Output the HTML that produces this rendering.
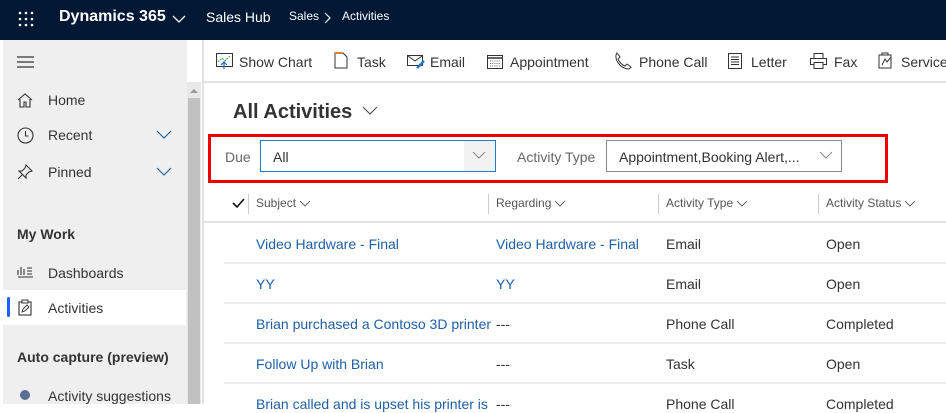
<!DOCTYPE html>
<html><head><meta charset="utf-8"><style>
*{box-sizing:border-box;margin:0;padding:0}
body{width:946px;height:404px;overflow:hidden;background:#fff;font-family:"Segoe UI","Liberation Sans",sans-serif;font-size:14px;color:#333;position:relative;line-height:1.3}
.a{position:absolute;white-space:nowrap}
.top{left:0;top:0;width:946px;height:40px;background:#001834;color:#fff}
.side{left:3px;top:40px;width:184px;height:364px;background:#efefef}
.lnk{color:#1e5fa5}
.hd{color:#555;font-size:12px}
.sep{width:1px;height:20px;background:#ccc;top:194px}
.rb{left:224px;width:722px;height:2px;background:#eeeeee}
svg{position:absolute}
.hd svg{position:static;vertical-align:middle;margin-left:3px}
</style></head><body>
<div class="a top">
  <svg style="left:18px;top:11px" width="16" height="16" fill="#fff"><circle cx="2" cy="2" r="1.3"/><circle cx="8" cy="2" r="1.3"/><circle cx="14" cy="2" r="1.3"/><circle cx="2" cy="8" r="1.3"/><circle cx="8" cy="8" r="1.3"/><circle cx="14" cy="8" r="1.3"/><circle cx="2" cy="14" r="1.3"/><circle cx="8" cy="14" r="1.3"/><circle cx="14" cy="14" r="1.3"/></svg>
  <div class="a" style="left:59px;top:7px;font-size:16px;font-weight:bold">Dynamics 365</div>
  <svg style="left:172px;top:14px" width="14" height="10"><path d="M1 2l6 6 6-6" stroke="#fff" fill="none" stroke-width="1.3"/></svg>
  <div class="a" style="left:206px;top:8px;font-size:14px">Sales Hub</div>
  <div class="a" style="left:289px;top:9px;font-size:12px">Sales</div>
  <svg style="left:324px;top:12px" width="8" height="12"><path d="M1 1l5 5-5 5" stroke="#fff" fill="none" stroke-width="1.2"/></svg>
  <div class="a" style="left:342px;top:9px;font-size:12px">Activities</div>
</div>
<div class="a side"></div>
<div class="a" style="left:187px;top:82px;width:14px;height:322px;background:#e8e8e8"></div>
<svg style="left:190px;top:88px" width="8" height="6"><path d="M0 5L4 1 8 5z" fill="#999"/></svg>
<div class="a" style="left:188px;top:98px;width:12px;height:306px;background:#c1c1c1"></div>
<div class="a" style="left:202px;top:40px;width:2px;height:364px;background:#e1e1e1"></div>
<!-- sidebar -->
<svg style="left:17px;top:56px" width="17" height="12"><path d="M0 1h17M0 6h17M0 11h17" stroke="#333" stroke-width="1.2"/></svg>
<svg style="left:17px;top:92px" width="16" height="16"><path d="M1 8L8 2l7 6M3 7v8h4v-5h2v5h4V7" stroke="#333" fill="none" stroke-width="1.1"/></svg>
<div class="a" style="left:48px;top:91px">Home</div>
<svg style="left:17px;top:127px" width="17" height="17"><circle cx="8.5" cy="8.5" r="7.5" stroke="#333" fill="none" stroke-width="1.1"/><path d="M8.5 4v5h3" stroke="#333" fill="none" stroke-width="1.1"/></svg>
<div class="a" style="left:48px;top:126px">Recent</div>
<svg style="left:156px;top:130px" width="16" height="10"><path d="M1 1l7 7 7-7" stroke="#2266aa" fill="none" stroke-width="1.2"/></svg>
<svg style="left:17px;top:164px" width="16" height="16"><path d="M9 1l6 6-3 1-3 3 0 3-7-7 3 0 3-3zM5 11l-4 4" stroke="#333" fill="none" stroke-width="1.1"/></svg>
<div class="a" style="left:48px;top:163px">Pinned</div>
<svg style="left:156px;top:167px" width="16" height="10"><path d="M1 1l7 7 7-7" stroke="#2266aa" fill="none" stroke-width="1.2"/></svg>
<div class="a" style="left:17px;top:225px;font-weight:bold;color:#333">My Work</div>
<svg style="left:17px;top:265px" width="16" height="15"><path d="M1 5v5M4 2v8M7 4v6M10 3h5M10 6h5M10 9h5M1 12h15" stroke="#333" stroke-width="1.1"/></svg>
<div class="a" style="left:48px;top:264px">Dashboards</div>
<div class="a" style="left:3px;top:290px;width:183px;height:35px;background:#fff"></div>
<div class="a" style="left:7px;top:297px;width:3px;height:20px;background:#1f5fff;border-radius:2px"></div>
<svg style="left:18px;top:299px" width="14" height="17"><rect x="1" y="3" width="12" height="13" stroke="#333" fill="none" stroke-width="1.1"/><rect x="4" y="1" width="6" height="3" fill="#fff" stroke="#333" stroke-width="1"/><path d="M4 13l1-3 4-4 2 2-4 4z" stroke="#333" fill="none" stroke-width="0.9"/></svg>
<div class="a" style="left:48px;top:299px">Activities</div>
<div class="a" style="left:17px;top:348px;font-weight:bold;color:#333">Auto capture (preview)</div>
<div class="a" style="left:20px;top:390px;width:10px;height:10px;border-radius:50%;background:#5a6e94"></div>
<div class="a" style="left:48px;top:387px">Activity suggestions</div>
<!-- command bar -->
<div class="a" style="left:204px;top:81px;width:742px;height:2px;background:#e1e1e1"></div>
<svg style="left:216px;top:53px" width="17" height="17"><rect x="0.5" y="0.5" width="16" height="13" stroke="#333" fill="none"/><path d="M2 9l4-4 3 3 5-5" stroke="#4a4" fill="none" stroke-dasharray="2 1"/><path d="M8 16V9M5 12l3-3 3 3" stroke="#2266cc" fill="none" stroke-width="1.2"/></svg>
<div class="a" style="left:239px;top:53px">Show Chart</div>
<svg style="left:334px;top:52px" width="14" height="17"><path d="M1 1h8l4 4v11H1z" stroke="#333" fill="none"/><path d="M1 1h6" stroke="#e87a20" stroke-width="2"/></svg>
<div class="a" style="left:357px;top:53px">Task</div>
<svg style="left:407px;top:55px" width="18" height="14"><rect x="0.5" y="0.5" width="15" height="10" stroke="#333" fill="none"/><path d="M1 1l7 5 7-5" stroke="#333" fill="none"/><path d="M10 13l7-7" stroke="#2277cc" stroke-width="2.5"/></svg>
<div class="a" style="left:430px;top:53px">Email</div>
<svg style="left:487px;top:53px" width="16" height="16"><rect x="0.5" y="2.5" width="15" height="13" stroke="#333" fill="none"/><path d="M1 5h14" stroke="#333" stroke-width="1.5"/><path d="M3 8h10M3 10.5h10M3 13h10" stroke="#666" stroke-dasharray="1 1.2"/></svg>
<div class="a" style="left:510px;top:53px">Appointment</div>
<svg style="left:614px;top:52px" width="18" height="18"><path d="M3 1l3 4-2 2c1 3 4 6 7 7l2-2 4 3-2 2C8 17 1 10 2 3z" stroke="#333" fill="none"/></svg>
<div class="a" style="left:639px;top:53px">Phone Call</div>
<svg style="left:728px;top:53px" width="14" height="16"><rect x="0.5" y="0.5" width="13" height="15" stroke="#333" fill="none"/><path d="M3 4h8M3 6.5h8M3 9h8M3 11.5h8" stroke="#333"/></svg>
<div class="a" style="left:751px;top:53px">Letter</div>
<svg style="left:810px;top:53px" width="17" height="16"><rect x="4" y="0.5" width="9" height="5" stroke="#333" fill="none"/><rect x="0.5" y="5.5" width="16" height="6" stroke="#333" fill="none"/><rect x="4" y="9.5" width="9" height="6" stroke="#333" fill="#fff"/></svg>
<div class="a" style="left:834px;top:53px">Fax</div>
<svg style="left:878px;top:52px" width="16" height="17"><rect x="1" y="3" width="12" height="13" stroke="#333" fill="none"/><path d="M4 3V1h6v2M4 13l3-6 2 3 4-5" stroke="#333" fill="none"/></svg>
<div class="a" style="left:901px;top:53px">Service</div>
<!-- title -->
<div class="a" style="left:233px;top:99px;font-size:20px;font-weight:600;color:#333">All Activities</div>
<svg style="left:362px;top:106px" width="16" height="10"><path d="M1 1l7 7 7-7" stroke="#555" fill="none" stroke-width="1.2"/></svg>
<!-- filter -->
<div class="a" style="left:208px;top:134px;width:680px;height:49px;border:3px solid #e00"></div>
<div class="a" style="left:225px;top:148px;color:#666">Due</div>
<div class="a" style="left:260px;top:140px;width:236px;height:32px;border:1px solid #1f7ad0;background:#fff"></div>
<div class="a" style="left:464px;top:141px;width:31px;height:30px;background:#f2f2f2"></div>
<svg style="left:472px;top:151px" width="14" height="9"><path d="M1 1l6 6 6-6" stroke="#888" fill="none"/></svg>
<div class="a" style="left:273px;top:148px;color:#333">All</div>
<div class="a" style="left:517px;top:148px;color:#666">Activity Type</div>
<div class="a" style="left:606px;top:140px;width:236px;height:32px;border:1px solid #8a8a8a"></div>
<div class="a" style="left:619px;top:148px;color:#333">Appointment,Booking Alert,...</div>
<svg style="left:819px;top:151px" width="14" height="9"><path d="M1 1l6 6 6-6" stroke="#888" fill="none"/></svg>
<!-- grid header -->
<svg style="left:232px;top:198px" width="13" height="11"><path d="M1 5l4 4 7-8" stroke="#111" fill="none" stroke-width="1.6"/></svg>
<div class="a sep" style="left:248px"></div>
<div class="a hd" style="left:256px;top:196px">Subject<svg width="12" height="8"><path d="M1 1l5 5 5-5" stroke="#666" fill="none"/></svg></div>
<div class="a sep" style="left:488px"></div>
<div class="a hd" style="left:496px;top:196px">Regarding<svg width="12" height="8"><path d="M1 1l5 5 5-5" stroke="#666" fill="none"/></svg></div>
<div class="a sep" style="left:658px"></div>
<div class="a hd" style="left:666px;top:196px">Activity Type<svg width="12" height="8"><path d="M1 1l5 5 5-5" stroke="#666" fill="none"/></svg></div>
<div class="a sep" style="left:818px"></div>
<div class="a hd" style="left:826px;top:196px">Activity Status<svg width="12" height="8"><path d="M1 1l5 5 5-5" stroke="#666" fill="none"/></svg></div>
<div class="a" style="left:204px;top:221px;width:742px;height:2px;background:#e1e1e1"></div>
<!-- rows -->
<div class="a rb" style="top:262px"></div><div class="a rb" style="top:302px"></div><div class="a rb" style="top:342px"></div><div class="a rb" style="top:382px"></div>
<div class="a lnk" style="left:256px;top:235px">Video Hardware - Final</div><div class="a lnk" style="left:496px;top:235px">Video Hardware - Final</div><div class="a" style="left:666px;top:235px">Email</div><div class="a" style="left:826px;top:235px">Open</div>
<div class="a lnk" style="left:256px;top:275px">YY</div><div class="a lnk" style="left:496px;top:275px">YY</div><div class="a" style="left:666px;top:275px">Email</div><div class="a" style="left:826px;top:275px">Open</div>
<div class="a lnk" style="left:256px;top:315px">Brian purchased a Contoso 3D printer</div><div class="a" style="left:496px;top:315px">---</div><div class="a" style="left:666px;top:315px">Phone Call</div><div class="a" style="left:826px;top:315px">Completed</div>
<div class="a lnk" style="left:256px;top:355px">Follow Up with Brian</div><div class="a" style="left:496px;top:355px">---</div><div class="a" style="left:666px;top:355px">Task</div><div class="a" style="left:826px;top:355px">Open</div>
<div class="a lnk" style="left:256px;top:395px;width:232px;overflow:hidden">Brian called and is upset his printer is</div><div class="a" style="left:496px;top:395px">---</div><div class="a" style="left:666px;top:395px">Phone Call</div><div class="a" style="left:826px;top:395px">Completed</div>
</body></html>
